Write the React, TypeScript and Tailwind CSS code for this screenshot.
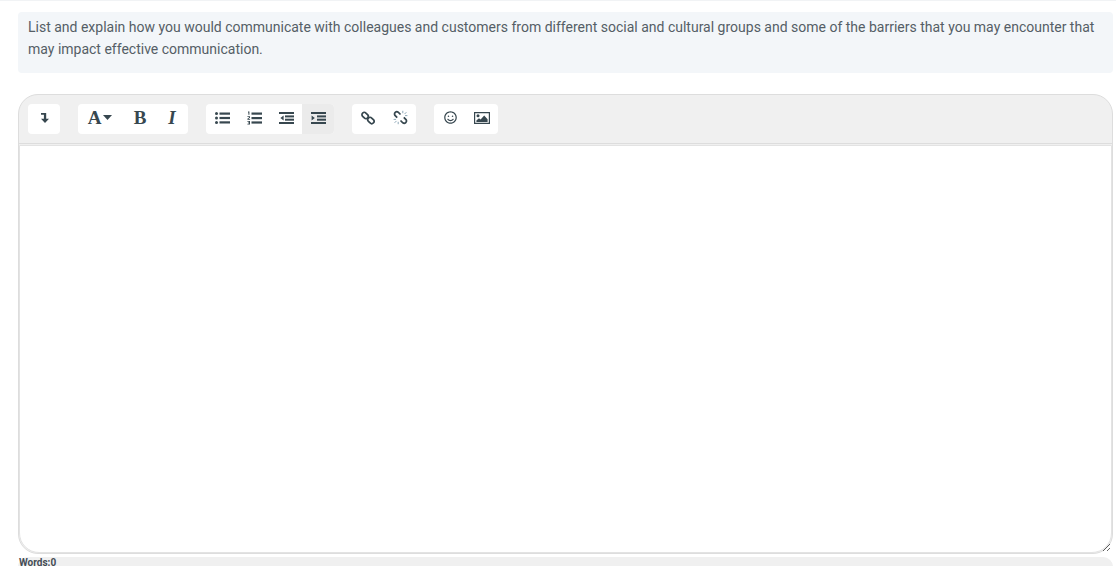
import { FaRegSmile } from "react-icons/fa";
import type { ReactNode } from "react";

function Btn({ children, active, wide }: { children: ReactNode; active?: boolean; wide?: boolean }) {
  return (
    <div
      className={`flex h-[30px] items-center justify-center pb-[3px] ${wide ? "w-[46px]" : "w-8"} ${active ? "bg-[#ebebeb]" : ""}`}
    >
      {children}
    </div>
  );
}

function Group({ children }: { children: ReactNode }) {
  return <div className="flex overflow-hidden rounded-[4px] bg-white text-[#37474f]">{children}</div>;
}

function ListUl() {
  return (
    <svg width="15" height="12" viewBox="0 0 15 12" fill="currentColor">
      <circle cx="1.5" cy="1.5" r="1.5" />
      <circle cx="1.5" cy="6" r="1.5" />
      <circle cx="1.5" cy="10.5" r="1.5" />
      <rect x="4.5" y="0.5" width="10.5" height="2.2" />
      <rect x="4.5" y="4.9" width="10.5" height="2.2" />
      <rect x="4.5" y="9.3" width="10.5" height="2.2" />
    </svg>
  );
}

function ListOl() {
  return (
    <svg width="15" height="14" viewBox="0 0 15 14" fill="currentColor">
      <path d="M1 0.5h1.4v3.2H1.4V1.4H1z" />
      <path d="M0.4 5.2h2.6v1.6L1.4 8h1.7v0.8H0.4V7.7L2 6.5V6H0.4z" />
      <path d="M0.4 10h2.6v3.6H0.4v-0.8H2v-0.6H1v-0.7h1v-0.7H0.4z" />
      <rect x="4.5" y="1.5" width="10.5" height="2.2" />
      <rect x="4.5" y="6" width="10.5" height="2.2" />
      <rect x="4.5" y="10.4" width="10.5" height="2.2" />
    </svg>
  );
}

function Outdent() {
  return (
    <svg width="15" height="12" viewBox="0 0 15 12" fill="currentColor">
      <rect width="15" height="2" />
      <rect x="6" y="3.4" width="9" height="2" />
      <rect x="6" y="6.7" width="9" height="2" />
      <rect y="10" width="15" height="2" />
      <path d="M4.6 3.4v5.2L1.4 6z" />
    </svg>
  );
}

function Indent() {
  return (
    <svg width="15" height="12" viewBox="0 0 15 12" fill="currentColor">
      <rect width="15" height="2" />
      <rect x="6" y="3.4" width="9" height="2" />
      <rect x="6" y="6.7" width="9" height="2" />
      <rect y="10" width="15" height="2" />
      <path d="M0.6 3.4v5.2L3.8 6z" />
    </svg>
  );
}

function Link() {
  return (
    <svg width="14" height="14" viewBox="0 0 14 14" fill="none" stroke="currentColor" strokeWidth="1.7">
      <rect x="0.6" y="2.2" width="7" height="4.6" rx="2.3" transform="rotate(45 4.1 4.5)" />
      <rect x="6.4" y="7.2" width="7" height="4.6" rx="2.3" transform="rotate(45 9.9 9.5)" />
    </svg>
  );
}

function Unlink() {
  return (
    <svg width="15" height="15" viewBox="0 0 15 15" fill="none" stroke="currentColor" strokeWidth="1.7">
      <path d="M7.5 4.5 5.2 2.2a2.3 2.3 0 0 0-3.2 3.2L4.2 7.7" />
      <path d="M7.5 10.5l2.3 2.3a2.3 2.3 0 0 0 3.2-3.2L10.8 7.3" />
      <path d="M9.8 0.8v2.4M13.4 2.2 11.5 4.1M14.4 5.6h-2.4M0.6 9.4h2.4M1.6 12.8l1.9-1.9M5.2 14.2v-2.4" strokeWidth="1" stroke="#8fa9b8" />
    </svg>
  );
}

function Picture() {
  return (
    <svg width="16" height="12" viewBox="0 0 16 12" fill="currentColor">
      <path d="M0 0h16v12H0zM1.2 1.2v9.6h13.6V1.2z" fillRule="evenodd" />
      <circle cx="4" cy="3.8" r="1.5" />
      <path d="M2.4 10V8.5L5 6.2l1.6 1.4 3.6-4 3.4 3.6V10z" />
    </svg>
  );
}

export default function App() {
  return (
    <div className="h-[566px] w-[1116px] overflow-hidden border-t border-[#f1f3f5] bg-white font-['Roboto',sans-serif]">
      <div className="pl-[18px] pr-[3px] pt-[11px]">
        <div className="mb-[21px] h-[61px] rounded-[4px] bg-[#f3f6f9] px-[10px] py-[4px] text-[14px] leading-[22px] text-[#555e66]">
          List and explain how you would communicate with colleagues and customers from different social and cultural groups and some of the barriers that you may encounter that may impact effective communication.
        </div>

        <div className="h-[460px] rounded-[20px] border border-[#dddddd] bg-[#f0f0f0]">
          <div className="flex h-[49px] items-start gap-[18px] border-b border-[#dddddd] pl-[9px] pt-[9px]">
            <Group>
              <Btn>
                <svg width="8" height="10" viewBox="0 0 8 10" className="ml-[1px] fill-[#37474f]">
                  <path d="M0 0h5.2v5.8H8L4 10 0 5.8h2.9V1.7H0z" />
                </svg>
              </Btn>
            </Group>
            <Group>
              <Btn wide>
                <span className="-ml-[2px] font-['Liberation_Serif',serif] text-[19px] font-bold leading-none">A</span>
                <svg width="9" height="5" viewBox="0 0 9 5" className="ml-[2px] fill-[#37474f]">
                  <path d="M0 0h9L4.5 5z" />
                </svg>
              </Btn>
              <Btn>
                <span className="font-['Liberation_Serif',serif] text-[19px] font-bold leading-none">B</span>
              </Btn>
              <Btn>
                <span className="font-['Liberation_Serif',serif] text-[19px] font-bold italic leading-none">I</span>
              </Btn>
            </Group>
            <Group>
              <Btn><ListUl /></Btn>
              <Btn><ListOl /></Btn>
              <Btn><Outdent /></Btn>
              <Btn active><Indent /></Btn>
            </Group>
            <Group>
              <Btn><Link /></Btn>
              <Btn><Unlink /></Btn>
            </Group>
            <Group>
              <Btn><FaRegSmile size={13} /></Btn>
              <Btn><Picture /></Btn>
            </Group>
          </div>
          <div className="mt-[1px] h-[408px] resize-y overflow-hidden rounded-b-[20px] border border-[#e3e3e3] bg-white" />
        </div>

        <div className="mt-[3px] h-[10px] rounded-t-[10px] bg-[#f0f0f0] pl-[1px] pt-[2px] text-[10px] font-bold leading-[8px] text-[#444c55]">
          Words:0
        </div>
      </div>
    </div>
  );
}
